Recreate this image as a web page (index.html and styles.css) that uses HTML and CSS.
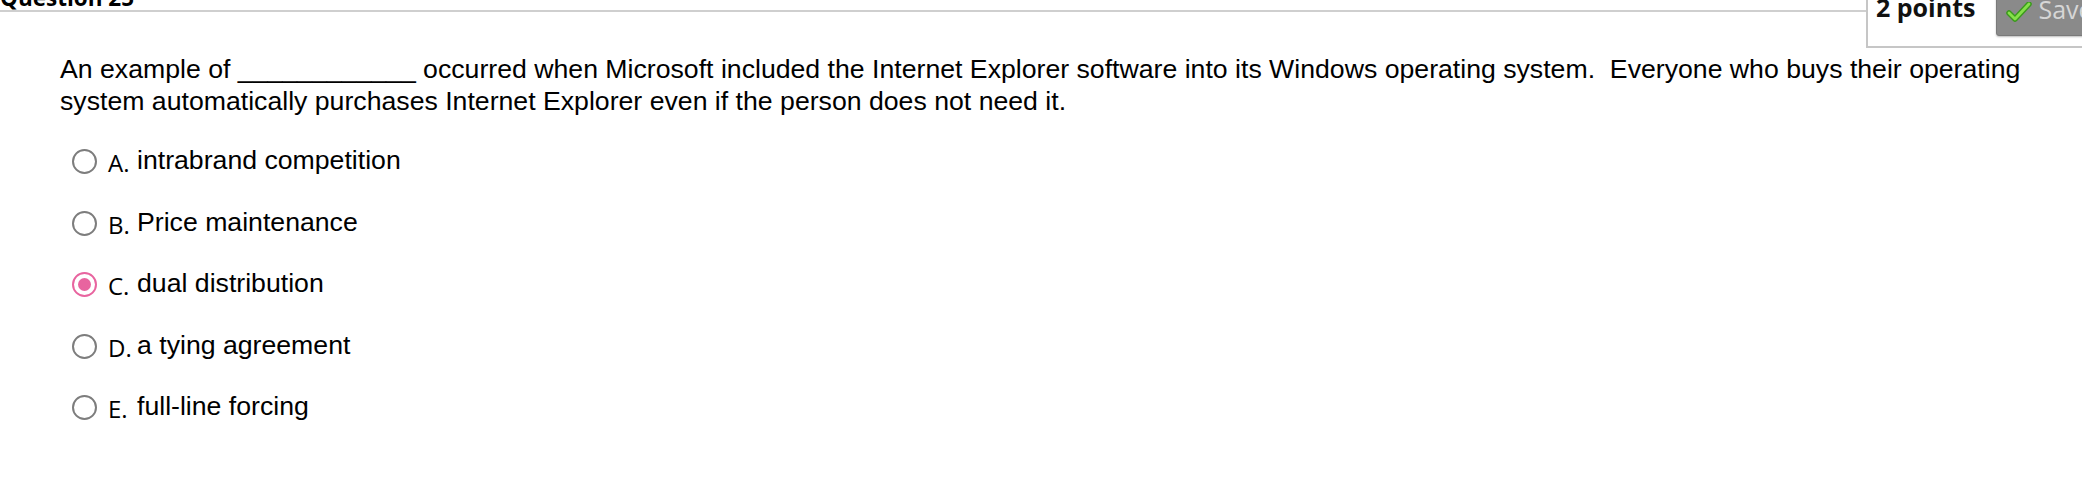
FILE: index.html
```html
<!DOCTYPE html>
<html>
<head>
<meta charset="utf-8">
<link rel="stylesheet" href="styles.css">
</head>
<body>
<div class="header">
  <div class="title-wrap"><h2 class="title">Question 25</h2></div>
  <div class="points-box">
    <span class="points">2 points</span>
    <span class="save-btn">
      <svg class="check" width="26" height="22" viewBox="0 0 26 22">
        <path d="M3 11 L9 17 L23 2" fill="none" stroke="#3a9a1c" stroke-width="5.5" stroke-linecap="round" stroke-linejoin="round"/>
        <path d="M3 11 L9 17 L23 2" fill="none" stroke="#86e04a" stroke-width="2.8" stroke-linecap="round" stroke-linejoin="round"/>
      </svg>
      <span class="save-label">Save</span>
    </span>
  </div>
</div>
<p class="question">An example of ____________ occurred when Microsoft included the Internet Explorer software into its Windows operating system.&nbsp; Everyone who buys their operating system automatically purchases Internet Explorer even if the person does not need it.</p>
<ul class="options">
  <li class="option"><span class="radio"></span><span class="line"><span class="letter">A.</span>intrabrand competition</span></li>
  <li class="option"><span class="radio"></span><span class="line"><span class="letter">B.</span>Price maintenance</span></li>
  <li class="option"><span class="radio selected"></span><span class="line"><span class="letter">C.</span>dual distribution</span></li>
  <li class="option"><span class="radio"></span><span class="line"><span class="letter">D.</span>a tying agreement</span></li>
  <li class="option"><span class="radio"></span><span class="line"><span class="letter">E.</span>full-line forcing</span></li>
</ul>
</body>
</html>
```
FILE: styles.css
```css
html, body {
  margin: 0;
  padding: 0;
  background: #ffffff;
}
body {
  width: 2082px;
  height: 482px;
  overflow: hidden;
  font-family: "Liberation Sans", Arial, sans-serif;
  color: #000;
}
.header {
  display: flex;
  align-items: flex-start;
  height: 48px;
}
.title-wrap {
  flex: 1;
  height: 10px;
  border-bottom: 2px solid #cfcfcf;
  overflow: visible;
}
.title {
  margin: -13px 0 0 0;
  font: bold 22.5px/22px "Open Sans", sans-serif;
  white-space: nowrap;
}
.points-box {
  width: 206px;
  height: 46px;
  border-left: 2px solid #c6c6c6;
  border-bottom: 2px solid #c6c6c6;
  display: flex;
  align-items: flex-start;
  padding-left: 8px;
}
.points {
  font: bold 25px/25px "Open Sans", sans-serif;
  margin-top: -5px;
  white-space: nowrap;
  color: #111;
}
.save-btn {
  margin-left: 21px;
  margin-top: -6px;
  height: 40px;
  flex: 1;
  background: #8a8a8a;
  border: 1px solid #7a7a7a;
  border-radius: 3px;
  box-shadow: 0 1px 2px #bdbdbd;
  display: flex;
  align-items: center;
  padding-left: 9px;
  gap: 6px;
}
.check {
  display: block;
  margin-top: -4px;
}
.save-label {
  font: 25px/25px "Open Sans", sans-serif;
  color: #d6d6d6;
  margin-top: -12px;
}
.question {
  margin: 5px 0 0 0;
  padding: 0 40px 0 60px;
  font-size: 26.67px;
  line-height: 32px;
}
.options {
  list-style: none;
  margin: 14px 0 0 0;
  padding: 0 0 0 72px;
}
.option {
  display: flex;
  align-items: center;
  height: 61.5px;
}
.radio {
  box-sizing: border-box;
  width: 25px;
  height: 25px;
  border: 2px solid #7d7d7d;
  border-radius: 50%;
  background: #fff;
  flex: none;
  display: flex;
  align-items: center;
  justify-content: center;
}
.radio.selected {
  border: 2.5px solid #e8649f;
}
.radio.selected::after {
  content: "";
  width: 13px;
  height: 13px;
  border-radius: 50%;
  background: #e8649f;
}
.line {
  margin-left: 11px;
  font-size: 26.67px;
  line-height: 30px;
  white-space: nowrap;
}
.letter {
  display: inline-block;
  width: 29px;
  font-family: "Open Sans", sans-serif;
  font-size: 24px;
  vertical-align: -3px;
}
```
